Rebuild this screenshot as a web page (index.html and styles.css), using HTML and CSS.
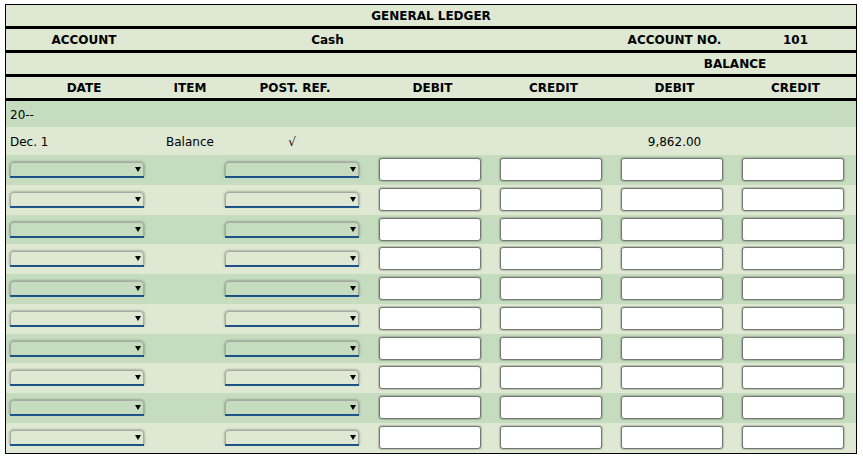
FILE: index.html
```html
<!DOCTYPE html>
<html>
<head>
<meta charset="utf-8">
<link rel="stylesheet" href="styles.css">
</head>
<body>
<div class="ledger">
  <div class="hrow"><div class="c-all">GENERAL LEDGER</div></div>
  <div class="hrow">
    <div class="c1">ACCOUNT</div>
    <div class="c-name">Cash</div>
    <div class="c6">ACCOUNT NO.</div>
    <div class="c7">101</div>
  </div>
  <div class="hrow"><div class="c-bal">BALANCE</div></div>
  <div class="hrow">
    <div>DATE</div><div>ITEM</div><div>POST. REF.</div><div>DEBIT</div><div>CREDIT</div><div>DEBIT</div><div>CREDIT</div>
  </div>
  <div class="drow dark year"><div class="txt">20--</div></div>
  <div class="drow light bal">
    <div class="txt">Dec. 1</div><div class="txt">Balance</div><div class="mid chk">√</div><div></div><div></div><div class="mid">9,862.00</div><div></div>
  </div>
  <div class="irow dark"><div class="s1"><span class="sel"><select></select></span></div><div></div><div class="s3"><span class="sel"><select></select></span></div><div class="ic"><input type="text"></div><div class="ic"><input type="text"></div><div class="ic"><input type="text"></div><div class="ic"><input type="text"></div></div>
  <div class="irow light"><div class="s1"><span class="sel"><select></select></span></div><div></div><div class="s3"><span class="sel"><select></select></span></div><div class="ic"><input type="text"></div><div class="ic"><input type="text"></div><div class="ic"><input type="text"></div><div class="ic"><input type="text"></div></div>
  <div class="irow dark"><div class="s1"><span class="sel"><select></select></span></div><div></div><div class="s3"><span class="sel"><select></select></span></div><div class="ic"><input type="text"></div><div class="ic"><input type="text"></div><div class="ic"><input type="text"></div><div class="ic"><input type="text"></div></div>
  <div class="irow light"><div class="s1"><span class="sel"><select></select></span></div><div></div><div class="s3"><span class="sel"><select></select></span></div><div class="ic"><input type="text"></div><div class="ic"><input type="text"></div><div class="ic"><input type="text"></div><div class="ic"><input type="text"></div></div>
  <div class="irow dark"><div class="s1"><span class="sel"><select></select></span></div><div></div><div class="s3"><span class="sel"><select></select></span></div><div class="ic"><input type="text"></div><div class="ic"><input type="text"></div><div class="ic"><input type="text"></div><div class="ic"><input type="text"></div></div>
  <div class="irow light"><div class="s1"><span class="sel"><select></select></span></div><div></div><div class="s3"><span class="sel"><select></select></span></div><div class="ic"><input type="text"></div><div class="ic"><input type="text"></div><div class="ic"><input type="text"></div><div class="ic"><input type="text"></div></div>
  <div class="irow dark"><div class="s1"><span class="sel"><select></select></span></div><div></div><div class="s3"><span class="sel"><select></select></span></div><div class="ic"><input type="text"></div><div class="ic"><input type="text"></div><div class="ic"><input type="text"></div><div class="ic"><input type="text"></div></div>
  <div class="irow light"><div class="s1"><span class="sel"><select></select></span></div><div></div><div class="s3"><span class="sel"><select></select></span></div><div class="ic"><input type="text"></div><div class="ic"><input type="text"></div><div class="ic"><input type="text"></div><div class="ic"><input type="text"></div></div>
  <div class="irow dark"><div class="s1"><span class="sel"><select></select></span></div><div></div><div class="s3"><span class="sel"><select></select></span></div><div class="ic"><input type="text"></div><div class="ic"><input type="text"></div><div class="ic"><input type="text"></div><div class="ic"><input type="text"></div></div>
  <div class="irow light"><div class="s1"><span class="sel"><select></select></span></div><div></div><div class="s3"><span class="sel"><select></select></span></div><div class="ic"><input type="text"></div><div class="ic"><input type="text"></div><div class="ic"><input type="text"></div><div class="ic"><input type="text"></div></div>
</div>
</body>
</html>
```

FILE: styles.css
```css
html, body {
  margin: 0;
  padding: 0;
  background: #ffffff;
}

.ledger {
  width: 850px;
  margin: 4px 0 0 5px;
  border: 1px solid #000;
  font-family: "DejaVu Sans", Verdana, sans-serif;
  font-size: 12px;
  color: #000;
}

.hrow, .drow, .irow {
  display: grid;
  grid-template-columns: 156px 56px 154px 121px 121px 121px 121px;
}

.hrow {
  height: 21px;
  border-bottom: 3px solid #000;
  background: #dee8d2;
  font-weight: bold;
  text-align: center;
  line-height: 23px;
  overflow: hidden;
}

.c-all { grid-column: 1 / 8; }
.c1 { grid-column: 1; }
.c-name { grid-column: 2 / 5; }
.c6 { grid-column: 6; }
.c7 { grid-column: 7; }
.c-bal { grid-column: 6 / 8; }

.dark { background: #c5dcbe; }
.light { background: #dee8d2; }

.drow {
  align-items: center;
}
.year { height: 26px; }
.bal { height: 28px; }

.drow > div {
  padding-top: 2px;
}

.txt {
  padding-left: 4px;
  white-space: nowrap;
}
.mid {
  text-align: center;
}
.chk {
  padding-right: 6px;
}

.irow {
  height: 29.75px;
  align-items: start;
}

.s1 { padding: 7px 0 0 4px; }
.s3 { padding: 7px 0 0 7px; }

.sel {
  position: relative;
  display: block;
  width: 134px;
  height: 14px;
  border-bottom: 2px solid #1f5f98;
}
.sel select {
  display: block;
  width: 134px;
  height: 14px;
  margin: 0;
  padding: 0;
  -webkit-appearance: none;
  appearance: none;
  background: transparent;
  border: 1px solid #a8a8a8;
  border-bottom: none;
  border-radius: 4px 4px 0 0;
  box-shadow: 0 0 2px 1px rgba(0, 0, 0, 0.22);
  box-sizing: border-box;
}
.sel::after {
  content: "";
  position: absolute;
  right: 3px;
  top: 5px;
  width: 0;
  height: 0;
  border-left: 3.5px solid transparent;
  border-right: 3.5px solid transparent;
  border-top: 5px solid #000;
}

.ic {
  padding: 3px 0 0 7px;
}
.ic input {
  display: block;
  width: 102px;
  height: 23px;
  margin: 0;
  padding: 0;
  box-sizing: border-box;
  background: #ffffff;
  border: 1px solid #767676;
  border-radius: 3px;
  box-shadow: 0 0 1px 1px rgba(0, 0, 0, 0.18);
}
```
